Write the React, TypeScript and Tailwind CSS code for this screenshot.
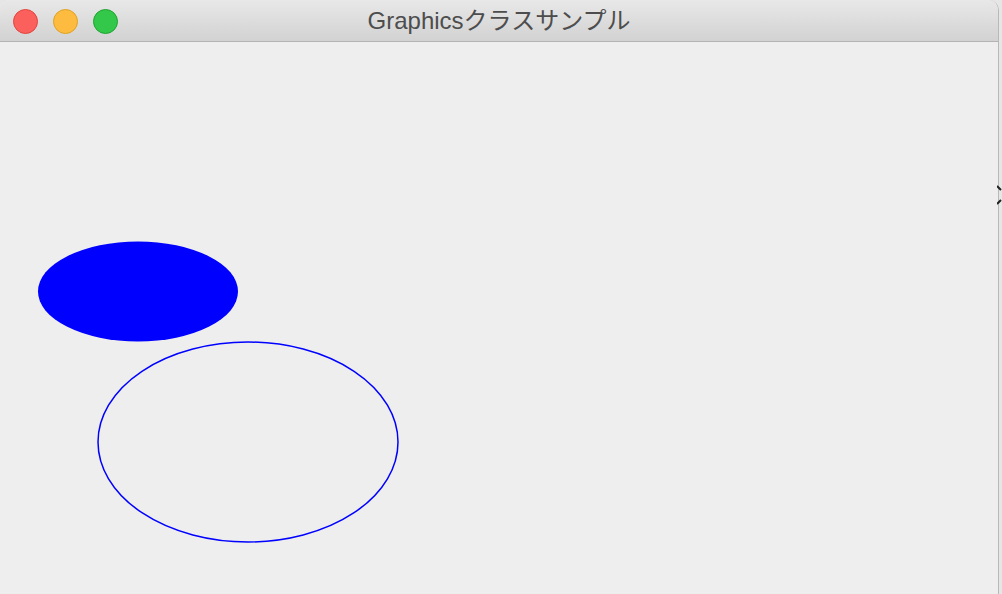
export default function App() {
  const lights = [
    { bg: "bg-[#fc605c]", border: "border-[#e0443e]" },
    { bg: "bg-[#fdbc40]", border: "border-[#dea123]" },
    { bg: "bg-[#34c84a]", border: "border-[#1fa42f]" },
  ];

  return (
    <div className="relative h-[594px] w-[1002px] overflow-hidden bg-[#e6e6e6]">
      <div className="flex h-full w-[999px] flex-col overflow-hidden rounded-t-[10px] border-r border-[#b8b8b8] bg-[#eeeeee]">
        <div className="relative flex h-[42px] shrink-0 items-center justify-center border-b border-[#b3b3b3] bg-gradient-to-b from-[#e8e8e8] to-[#d2d2d2]">
          <div className="absolute left-[13px] top-[9px] flex gap-[15px]">
            {lights.map((l, i) => (
              <span
                key={i}
                className={`h-[25px] w-[25px] rounded-full border ${l.bg} ${l.border}`}
              />
            ))}
          </div>
          <span
            className="pt-[1px] text-[24px] leading-none text-[#4d4d4d]"
            style={{ fontFamily: '"Liberation Sans", "Noto Sans CJK JP", sans-serif' }}
          >
            Graphicsクラスサンプル
          </span>
        </div>
        <div className="relative flex-1">
          <svg width="999" height="552" className="block">
            <ellipse cx="138" cy="249.5" rx="100" ry="50" fill="#0000ff" />
            <ellipse
              cx="248"
              cy="400"
              rx="150"
              ry="100"
              fill="none"
              stroke="#0000ff"
              strokeWidth="1.5"
            />
          </svg>
        </div>
      </div>
      <svg className="absolute left-[997px] top-[182px]" width="5" height="26">
        <path d="M0 4 L4 8 M0 22 L4 18" stroke="#222" strokeWidth="2" fill="none" />
      </svg>
    </div>
  );
}
